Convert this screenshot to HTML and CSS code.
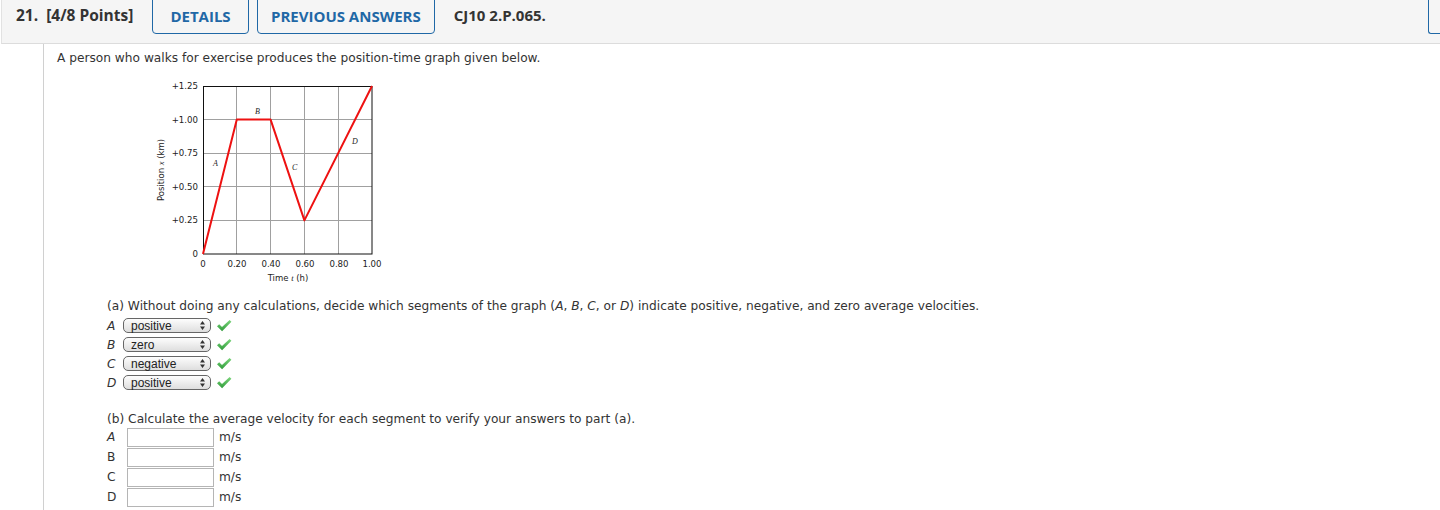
FILE: index.html
```html
<!DOCTYPE html>
<html>
<head>
<meta charset="utf-8">
<link rel="stylesheet" href="styles.css">
</head>
<body>
<div class="header">
  <div class="qnum">21.&nbsp; [4/8 Points]</div>
  <div class="tab tab-details">DETAILS</div>
  <div class="tab">PREVIOUS ANSWERS</div>
  <div class="qid">CJ10 2.P.065.</div>
  <div class="spacer"></div>
  <div class="tab tab-edge"></div>
</div>
<div class="content">
  <p class="intro">A person who walks for exercise produces the position-time graph given below.</p>
  <svg class="graph" width="240" height="207" viewBox="0 0 240 207" xmlns="http://www.w3.org/2000/svg">
    <g stroke="#a0a0a0" stroke-width="1">
      <line x1="58" y1="41.5" x2="227" y2="41.5"/>
      <line x1="58" y1="75.5" x2="227" y2="75.5"/>
      <line x1="58" y1="108.5" x2="227" y2="108.5"/>
      <line x1="58" y1="142.5" x2="227" y2="142.5"/>
      <line x1="91.5" y1="8" x2="91.5" y2="176"/>
      <line x1="125.5" y1="8" x2="125.5" y2="176"/>
      <line x1="159.5" y1="8" x2="159.5" y2="176"/>
      <line x1="193.5" y1="8" x2="193.5" y2="176"/>
    </g>
    <rect x="58.5" y="8.5" width="168.5" height="167.5" fill="none" stroke="#111" stroke-width="1"/>
    <polyline points="58,176 91.8,41.6 125.6,41.6 159.4,142.4 227,8" fill="none" stroke="#ee1111" stroke-width="2" stroke-linejoin="round"/>
    <g class="tick" text-anchor="end">
      <text x="53" y="11">+1.25</text>
      <text x="53" y="44.5">+1.00</text>
      <text x="53" y="78">+0.75</text>
      <text x="53" y="111.5">+0.50</text>
      <text x="53" y="145">+0.25</text>
      <text x="53" y="179">0</text>
    </g>
    <g class="tick" text-anchor="middle">
      <text x="58" y="189">0</text>
      <text x="92" y="189">0.20</text>
      <text x="126" y="189">0.40</text>
      <text x="160" y="189">0.60</text>
      <text x="194" y="189">0.80</text>
      <text x="227" y="189">1.00</text>
    </g>
    <text class="axis" x="143" y="203" text-anchor="middle">Time <tspan class="ital">t</tspan> (h)</text>
    <text class="axis" x="0" y="0" text-anchor="middle" transform="translate(19 92) rotate(-90)">Position <tspan class="ital">x</tspan> (km)</text>
    <g class="seg">
      <text x="68" y="88">A</text>
      <text x="110" y="36">B</text>
      <text x="147" y="92">C</text>
      <text x="207" y="66">D</text>
    </g>
  </svg>

  <div class="part">
    <p class="ptext">(a) Without doing any calculations, decide which segments of the graph (<i>A</i>, <i>B</i>, <i>C</i>, or <i>D</i>) indicate positive, negative, and zero average velocities.</p>
    <div class="srow"><span class="lbl">A</span><span class="sel">positive<svg class="arr" width="5" height="9" viewBox="0 0 5 9"><path d="M2.5 0L5 3.5H0Z M0 5.5H5L2.5 9Z" fill="#333"/></svg></span><svg class="chk" width="16" height="13" viewBox="0 0 16 13"><defs><linearGradient id="g1" x1="0" y1="0" x2="0" y2="1"><stop offset="0" stop-color="#7cd67c"/><stop offset="1" stop-color="#2f9b3a"/></linearGradient></defs><path d="M1 7.2L3.2 5.2L6 8L13.6 1L15.4 2.8L6.1 12.2Z" fill="url(#g1)"/></svg></div>
    <div class="srow"><span class="lbl">B</span><span class="sel">zero<svg class="arr" width="5" height="9" viewBox="0 0 5 9"><path d="M2.5 0L5 3.5H0Z M0 5.5H5L2.5 9Z" fill="#333"/></svg></span><svg class="chk" width="16" height="13" viewBox="0 0 16 13"><path d="M1 7.2L3.2 5.2L6 8L13.6 1L15.4 2.8L6.1 12.2Z" fill="url(#g1)"/></svg></div>
    <div class="srow"><span class="lbl">C</span><span class="sel">negative<svg class="arr" width="5" height="9" viewBox="0 0 5 9"><path d="M2.5 0L5 3.5H0Z M0 5.5H5L2.5 9Z" fill="#333"/></svg></span><svg class="chk" width="16" height="13" viewBox="0 0 16 13"><path d="M1 7.2L3.2 5.2L6 8L13.6 1L15.4 2.8L6.1 12.2Z" fill="url(#g1)"/></svg></div>
    <div class="srow"><span class="lbl">D</span><span class="sel">positive<svg class="arr" width="5" height="9" viewBox="0 0 5 9"><path d="M2.5 0L5 3.5H0Z M0 5.5H5L2.5 9Z" fill="#333"/></svg></span><svg class="chk" width="16" height="13" viewBox="0 0 16 13"><path d="M1 7.2L3.2 5.2L6 8L13.6 1L15.4 2.8L6.1 12.2Z" fill="url(#g1)"/></svg></div>
  </div>

  <div class="part partb">
    <p class="ptext">(b) Calculate the average velocity for each segment to verify your answers to part (a).</p>
    <div class="irow"><span class="lbl2"><i>A</i></span><span class="box"></span><span class="unit">m/s</span></div>
    <div class="irow"><span class="lbl2">B</span><span class="box"></span><span class="unit">m/s</span></div>
    <div class="irow"><span class="lbl2">C</span><span class="box"></span><span class="unit">m/s</span></div>
    <div class="irow"><span class="lbl2">D</span><span class="box"></span><span class="unit">m/s</span></div>
  </div>
</div>
</body>
</html>
```

FILE: styles.css
```css
html, body {
  margin: 0;
  padding: 0;
  background: #fff;
}
body {
  font-family: "DejaVu Sans", Verdana, sans-serif;
  color: #333;
  overflow: hidden;
}
.header {
  display: flex;
  align-items: flex-start;
  height: 43px;
  margin-left: 1px;
  background: #f5f5f5;
  border-left: 1px solid #e2e2e2;
  border-bottom: 1px solid #dcdcdc;
  font-family: "Open Sans", "Liberation Sans", sans-serif;
  font-weight: 700;
  font-size: 15px;
}
.qnum {
  margin-left: 14px;
  margin-top: 5px;
  line-height: 20px;
  color: #333;
  width: 136px;
  font-size: 15.5px;
}
.tab {
  margin-top: -2px;
  height: 36px;
  box-sizing: border-box;
  padding: 7px 13px 0;
  line-height: 20px;
  border: 1px solid #1f68a6;
  border-radius: 0 0 4px 4px;
  color: #1f68a6;
  margin-right: 8px;
  text-align: center;
}
.tab-details {
  width: 97px;
  padding: 7px 0 0;
}
.qid {
  margin-left: 11px;
  margin-top: 5px;
  line-height: 20px;
  color: #333;
}
.spacer {
  flex: 1;
}
.tab-edge {
  width: 12px;
  margin-right: 0;
  padding: 0;
  border-right: none;
  border-radius: 0 0 0 3px;
}
.content {
  margin-left: 43px;
  border-left: 1px solid #d0d0d0;
  padding: 6px 0 0 13px;
  min-height: 470px;
}
.intro {
  margin: 0;
  font-size: 12.2px;
  line-height: 16px;
}
.graph {
  display: block;
  margin: 12px 0 0 88px;
}
.tick {
  font-family: "DejaVu Sans", sans-serif;
  font-size: 8.6px;
  fill: #222;
}
.axis {
  font-family: "DejaVu Sans", sans-serif;
  font-size: 8.5px;
  fill: #222;
}
.ital {
  font-family: "Liberation Serif", serif;
  font-style: italic;
}
.seg {
  font-family: "Liberation Serif", serif;
  font-style: italic;
  font-size: 8px;
  fill: #222;
}
.part {
  margin: 13px 0 0 50px;
}
.ptext {
  margin: 0 0 2px;
  font-size: 12.2px;
  line-height: 16px;
}
.srow {
  display: flex;
  align-items: center;
  height: 19px;
  font-size: 12.2px;
}
.lbl {
  width: 16px;
  font-style: italic;
}
.sel {
  display: flex;
  align-items: center;
  justify-content: space-between;
  box-sizing: border-box;
  width: 88px;
  height: 15px;
  padding: 0 5px 0 7px;
  border: 1px solid #666;
  border-radius: 5px;
  background: linear-gradient(#fdfdfd, #dedede);
  font-family: "Liberation Sans", Arial, sans-serif;
  font-size: 12px;
  color: #222;
}
.chk {
  margin-left: 5px;
}
.partb {
  margin-top: 19px;
}
.partb .ptext {
  margin-bottom: 0;
}
.irow {
  display: flex;
  align-items: center;
  height: 20px;
  font-size: 12.2px;
}
.lbl2 {
  width: 20px;
}
.box {
  box-sizing: border-box;
  width: 87px;
  height: 19px;
  border: 1px solid #b5b5b5;
  background: #fff;
}
.unit {
  margin-left: 5px;
}
```
